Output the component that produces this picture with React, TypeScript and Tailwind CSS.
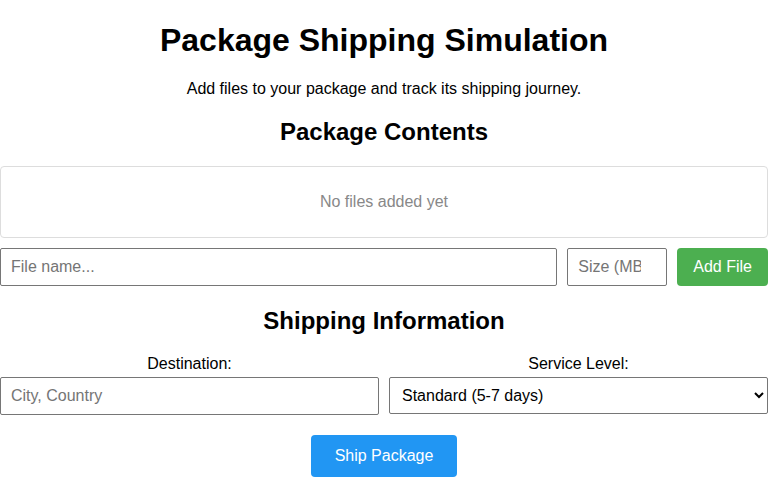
import { useState } from "react";

export default function App() {
  const [fileName, setFileName] = useState("");
  const [size, setSize] = useState("");
  const [destination, setDestination] = useState("");
  const [service, setService] = useState("standard");

  return (
    <div className="font-['Liberation_Sans',Arial,sans-serif] text-black bg-white min-h-screen">
      <h1 className="text-[32px] leading-[36.8px] font-bold text-center pt-[22px] mb-[21px]">
        Package Shipping Simulation
      </h1>
      <p className="text-base leading-[18.4px] text-center mb-5">
        Add files to your package and track its shipping journey.
      </p>

      <h2 className="text-2xl leading-[27.6px] font-bold text-center mb-5">Package Contents</h2>
      <div className="border border-[#ddd] rounded h-[72px] flex items-center justify-center">
        <p className="text-[#888]">No files added yet</p>
      </div>

      <div className="flex gap-[10px] mt-[10px]">
        <input
          type="text"
          value={fileName}
          onChange={(e) => setFileName(e.target.value)}
          placeholder="File name..."
          className="flex-1 h-[38px] px-[10px] border border-[#767676] rounded-[2px] placeholder:text-[#757575]"
        />
        <input
          type="number"
          value={size}
          onChange={(e) => setSize(e.target.value)}
          placeholder="Size (MB)"
          className="w-[100px] h-[38px] px-[10px] border border-[#767676] rounded-[2px] placeholder:text-[#757575]"
        />
        <button className="h-[38px] px-4 bg-[#4CAF50] text-white rounded">Add File</button>
      </div>

      <h2 className="text-2xl leading-[27.6px] font-bold text-center mt-[21px] mb-[21px]">
        Shipping Information
      </h2>
      <div className="grid grid-cols-2 gap-[10px]">
        <div className="flex flex-col">
          <label className="text-center leading-[18.4px] mb-[3px]">Destination:</label>
          <input
            type="text"
            value={destination}
            onChange={(e) => setDestination(e.target.value)}
            placeholder="City, Country"
            className="h-[38px] px-[10px] border border-[#767676] rounded-[2px] placeholder:text-[#757575]"
          />
        </div>
        <div className="flex flex-col">
          <label className="text-center leading-[18.4px] mb-[3px]">Service Level:</label>
          <select
            value={service}
            onChange={(e) => setService(e.target.value)}
            className="h-[37px] px-2 border border-[#767676] rounded-[2px] bg-white"
          >
            <option value="standard">Standard (5-7 days)</option>
            <option value="express">Express (2-3 days)</option>
            <option value="overnight">Overnight (1 day)</option>
          </select>
        </div>
      </div>

      <div className="flex justify-center mt-5">
        <button className="px-6 py-3 leading-[18.4px] bg-[#2196F3] text-white rounded">Ship Package</button>
      </div>
    </div>
  );
}
